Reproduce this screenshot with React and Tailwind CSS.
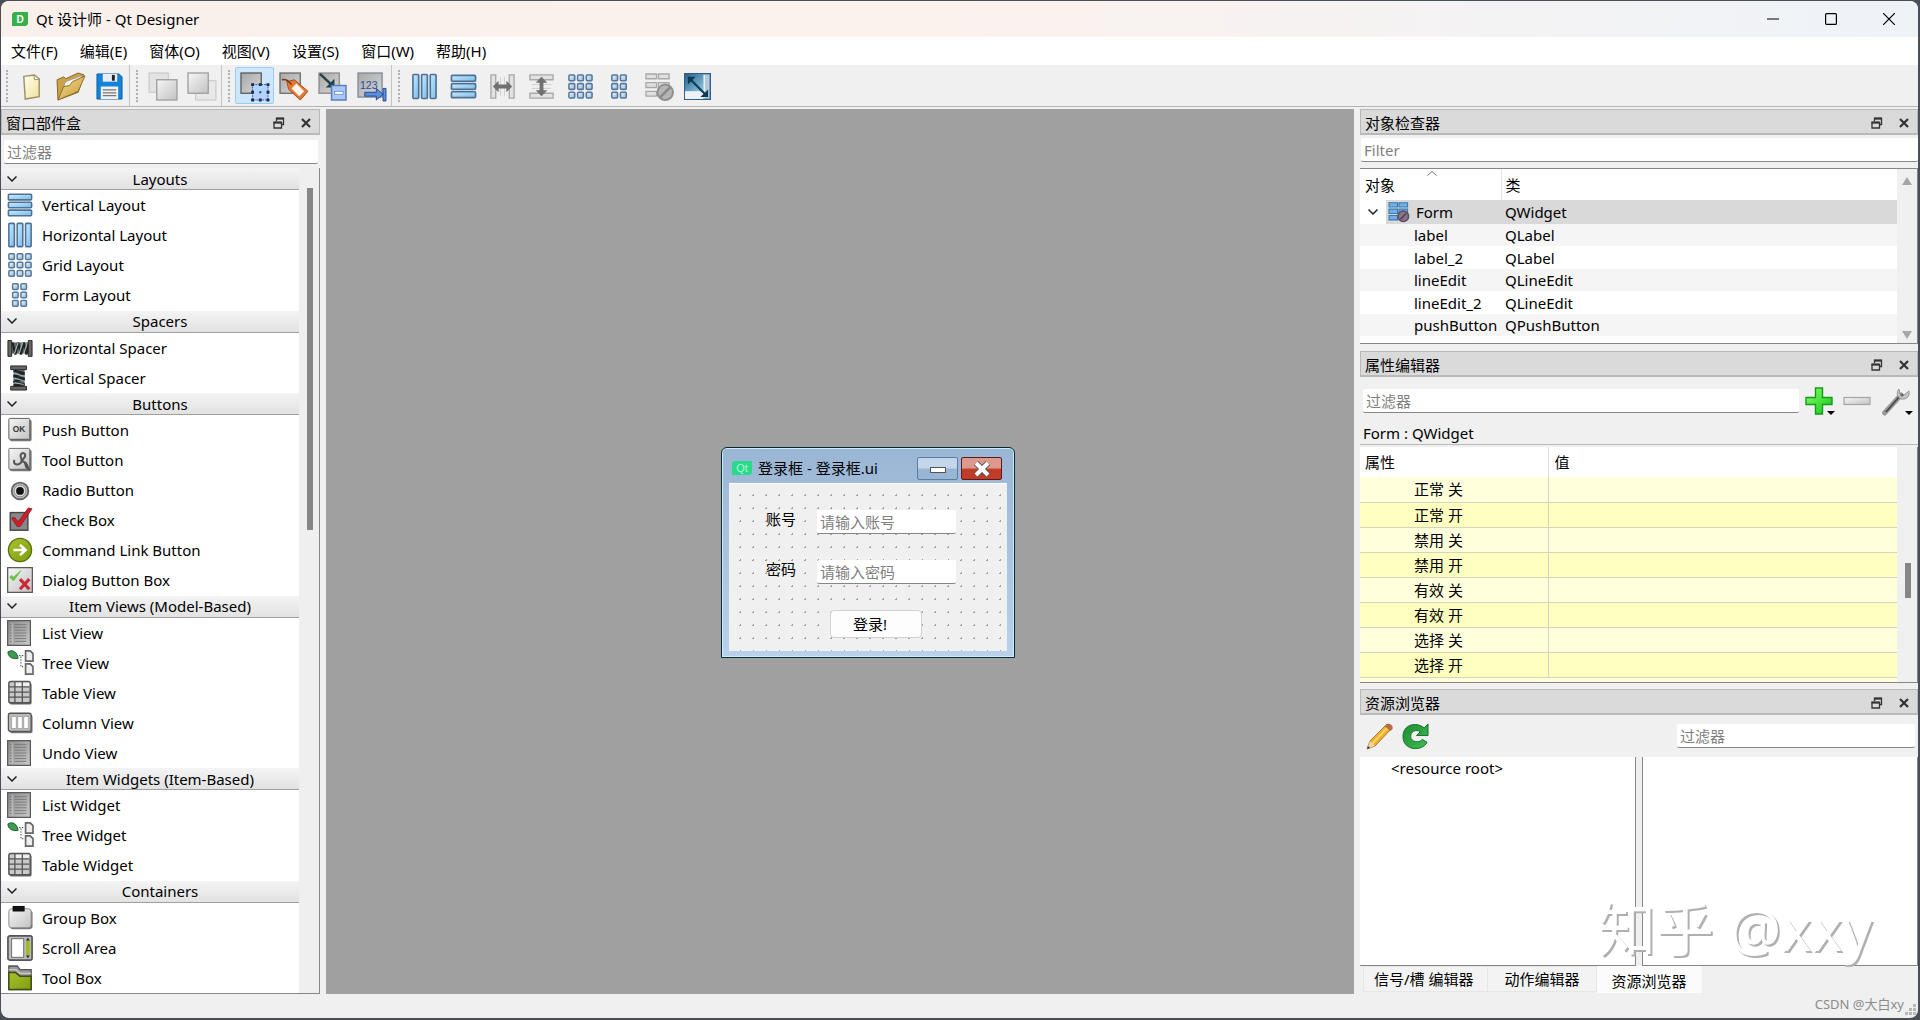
import { Fragment } from "react";

const sections = [
  {
    title: "Layouts",
    items: [["Vertical Layout", "rows"], ["Horizontal Layout", "columns"], ["Grid Layout", "grid"], ["Form Layout", "form"]],
  },
  { title: "Spacers", items: [["Horizontal Spacer", "hspring"], ["Vertical Spacer", "vspring"]] },
  {
    title: "Buttons",
    items: [
      ["Push Button", "push"],
      ["Tool Button", "tool"],
      ["Radio Button", "radio"],
      ["Check Box", "check"],
      ["Command Link Button", "command"],
      ["Dialog Button Box", "dialog"],
    ],
  },
  {
    title: "Item Views (Model-Based)",
    items: [
      ["List View", "list"],
      ["Tree View", "tree"],
      ["Table View", "table"],
      ["Column View", "columnView"],
      ["Undo View", "list"],
    ],
  },
  { title: "Item Widgets (Item-Based)", items: [["List Widget", "list"], ["Tree Widget", "tree"], ["Table Widget", "table"]] },
  { title: "Containers", items: [["Group Box", "group"], ["Scroll Area", "scroll"], ["Tool Box", "toolbox"]] },
];

const toolGroups = [
  [["新建", "new"], ["打开", "open"], ["保存", "save"]],
  [["放到后面", "back"], ["放到前面", "front"]],
  [["编辑窗口部件", "widgets"], ["编辑信号/槽", "signals"], ["编辑伙伴", "buddies"], ["编辑 Tab 顺序", "taborder"]],
  [
    ["水平布局", "columns"],
    ["垂直布局", "rows"],
    ["水平分裂器布局", "hsplit"],
    ["垂直分裂器布局", "vsplit"],
    ["栅格布局", "grid"],
    ["窗体布局", "form"],
    ["打破布局", "breakLayout"],
    ["调整大小", "adjust"],
  ],
];

const menus = ["文件(F)", "编辑(E)", "窗体(O)", "视图(V)", "设置(S)", "窗口(W)", "帮助(H)"];

const objects = [
  ["label", "QLabel"],
  ["label_2", "QLabel"],
  ["lineEdit", "QLineEdit"],
  ["lineEdit_2", "QLineEdit"],
  ["pushButton", "QPushButton"],
];

const properties = ["正常 关", "正常 开", "禁用 关", "禁用 开", "有效 关", "有效 开", "选择 关", "选择 开"];

const Cells = ({ xs, ys }) =>
  ys.map((y) => xs.map((x) => (
    <rect key={`${x}-${y}`} x={x} y={y} width="6" height="6" rx="1" fill="url(#cell)" stroke="#56799c" strokeWidth="1.6" />
  )));

const icons = {
  rows: [2.5, 11, 19.5].map((y) => (
    <rect key={y} x="1.5" y={y} width="25" height="6" rx="1" fill="url(#blue)" stroke="#4f7196" strokeWidth="1.7" />
  )),
  columns: [2, 11, 20].map((x) => (
    <rect key={x} x={x} y="1.5" width="6" height="25" rx="1" fill="url(#blue)" stroke="#4f7196" strokeWidth="1.7" />
  )),
  grid: <Cells xs={[2, 11, 20]} ys={[2, 11, 20]} />,
  form: <Cells xs={[6, 15]} ys={[2, 11, 20]} />,
  hspring: (
    <>
      <path d="M5 8h18v12H5z" fill="#5d6c70" />
      <path d="M6 8l3 13 3-13 3 13 3-13 3 13 2-13" fill="none" stroke="#222" strokeWidth="2.4" />
      <path d="M8 20l4-12M13 20l4-12M18 20l4-12" stroke="#9fb6bd" strokeWidth="1.3" />
      <path d="M1 6h4v17H1zM23 6h4v17h-4z" fill="#666" stroke="#222" />
    </>
  ),
  vspring: (
    <>
      <path d="M7 5h12v18H7z" fill="#5d6c70" />
      <path d="M7 6l12 3-12 3 12 3-12 3 12 3-12 1" fill="none" stroke="#222" strokeWidth="2.4" />
      <path d="M8 9l10 3M8 14l10 3M8 19l10 2" stroke="#9fb6bd" strokeWidth="1.3" />
      <path d="M4 1h17v4H4zM4 23h17v4H4z" fill="#666" stroke="#222" />
    </>
  ),
  push: (
    <>
      <rect x="3" y="3" width="23.5" height="23" rx="2" fill="#777" />
      <rect x="2" y="1.5" width="22.5" height="22.5" rx="1" fill="url(#silver)" stroke="#555" />
      <text x="13" y="16" textAnchor="middle" fontSize="9" fontWeight="700" fill="#333" fontFamily="Liberation Sans">OK</text>
    </>
  ),
  tool: (
    <>
      <rect x="3" y="3" width="23.5" height="23" rx="2" fill="#777" />
      <rect x="2" y="1.5" width="22.5" height="22.5" rx="1" fill="url(#silver)" stroke="#666" />
      <path d="M8 14c-2 5 4 6 7 3 3-4-2-6 0-9 2-3 6-1 4 3l-3 4 4 2 4 8" fill="none" stroke="#555" strokeWidth="2.2" />
      <path d="M18 17l4 1 3 7-5-2z" fill="#555" />
    </>
  ),
  radio: (
    <>
      <circle cx="14" cy="15" r="9" fill="#c9c9c9" stroke="#666" strokeWidth="2" />
      <circle cx="14" cy="15" r="6.5" fill="#ddd" stroke="#777" />
      <circle cx="14" cy="15" r="4.200" fill="#111" />
    </>
  ),
  check: (
    <>
      <rect x="3.5" y="6" width="19" height="19" fill="#888" stroke="#444" strokeWidth="1.5" />
      <path d="M5 12l3-1 4 5L23 1l4 1-13 19h-3z" fill="#cf1e28" stroke="#8c1018" strokeWidth=".8" />
    </>
  ),
  command: (
    <>
      <circle cx="14" cy="14" r="12.5" fill="url(#lime)" stroke="#55700f" strokeWidth="1.4" />
      <path d="M7 14h12M14 8.500l6 5.500-6 5.500" fill="none" stroke="#fff" strokeWidth="2.8" />
    </>
  ),
  dialog: (
    <>
      <rect x=".7" y=".7" width="26.600" height="26.600" fill="url(#silver)" stroke="#555" strokeWidth="1.3" />
      <path d="M3 11l4 4 8-11-8 7-2-2z" fill="#6cc24a" stroke="#6cc24a" />
      <path d="M14 13l10 11M24 13L14 24" stroke="#cc2a36" strokeWidth="3.4" />
    </>
  ),
  list: (
    <>
      <rect x=".7" y=".7" width="24.500" height="26.600" fill="url(#steel)" stroke="#555" strokeWidth="1.3" />
      <path d="M5.5 3v22" stroke="#ccc" />
      {[5, 8, 11, 14, 17, 20, 23].map((y) => (
        <path key={y} d={`M3 ${y}h2M8 ${y}h13`} stroke="#6d6d6d" strokeWidth=".8" />
      ))}
    </>
  ),
  tree: (
    <>
      <path d="M1 2c5-3 10 0 11 7-6 1-11-1-11-7z" fill="#3b9b50" stroke="#1d5b2c" />
      <path d="M13 6h6M15 7v11h4" fill="none" stroke="#333" strokeDasharray="1.5 1.5" />
      <path d="M20 1h5l3 3v8h-8zM20 15h5l3 3v8h-8z" fill="#eee" stroke="#666" strokeWidth="1.8" />
    </>
  ),
  table: (
    <>
      <rect x="3" y="3" width="23.500" height="23.500" rx="2" fill="#666" />
      <rect x="2" y="1.500" width="23" height="23" rx="2" fill="#c9c9c9" stroke="#555" strokeWidth="1.6" />
      <path d="M9 3h15v4H9z" fill="#eee" />
      <path d="M2 7.500h22M2 13h22M2 18.500h22M8.500 2v22M16.500 2v22" stroke="#555" strokeWidth="1.4" />
    </>
  ),
  columnView: (
    <>
      <rect x="3" y="5" width="24.500" height="20" rx="2" fill="#777" />
      <rect x="1.500" y="3.500" width="24.500" height="19.500" rx="2" fill="#bbb" stroke="#555" strokeWidth="1.4" />
      <path d="M5 7h5v13H5zM11.500 7h5v13h-5zM18 7h5v13h-5z" fill="#fff" stroke="#999" strokeWidth=".8" />
    </>
  ),
  group: (
    <>
      <rect x="3" y="6" width="24.500" height="20" rx="3" fill="#777" />
      <rect x="2" y="4" width="24" height="20.500" rx="3" fill="url(#silver)" stroke="#888" />
      <rect x="6" y="1" width="13" height="6" fill="#111" />
    </>
  ),
  scroll: (
    <>
      <rect x="1" y="1" width="26" height="26" rx="2" fill="#bbb" stroke="#555" strokeWidth="1.8" />
      <rect x="5" y="4" width="13" height="20" fill="#fff" stroke="#666" />
      <rect x="20.500" y="6" width="4" height="16" fill="#a2b927" />
      <path d="M20.500 6l2-3 2 3zM20.500 22l2 3 2-3z" fill="#222" />
    </>
  ),
  toolbox: (
    <>
      <path d="M2 1h9l3 4h12v21.500H2z" fill="#999" stroke="#555" strokeWidth="1.5" />
      <path d="M2 5h8l4 4h12" fill="none" stroke="#ccc" strokeWidth="1.200" />
      <path d="M2 8h7l5 4h12v14.500H2z" fill="url(#lime)" stroke="#3f4a14" strokeWidth="1.600" />
    </>
  ),
  new: (
    <>
      <path d="M6 3.500L17 2l5 4v18.500L7.500 27z" fill="url(#paper)" stroke="#9c9364" strokeWidth="1.500" />
      <path d="M16.500 2l.5 5 5-.5z" fill="#fff" stroke="#9c9364" />
    </>
  ),
  open: (
    <>
      <path d="M0 7l7-3 2 2 13-6 6 2-6 18L1 28z" fill="#c9a24a" stroke="#84642a" />
      <path d="M6 17l3-8L25 3l2 2-5 11-15 6z" fill="#f6f6ee" stroke="#999" strokeWidth=".8" />
      <path d="M1 28l6-14 6-1 3-4 13-6-7 16z" fill="url(#gold)" stroke="#8c6c25" />
    </>
  ),
  save: (
    <>
      <path d="M1 1h23l3 3v23H1z" fill="#1583d8" stroke="#0d5fa5" />
      <rect x="7" y="1" width="15" height="8" fill="#e9eef2" />
      <rect x="16.500" y="2" width="3" height="6" fill="#222" />
      <rect x="5" y="14" width="18" height="13" fill="#f1f1f1" />
      <path d="M7 17.500h14M7 20.500h14M7 23.500h14" stroke="#777" strokeWidth="1.300" />
    </>
  ),
  back: (
    <>
      <rect x="0" y="0" width="20" height="20" fill="#e3e3e3" stroke="#c3c3c3" />
      <rect x="8" y="7" width="21" height="21" fill="url(#silver)" stroke="#a0a0a0" strokeWidth="1.400" />
    </>
  ),
  front: (
    <>
      <rect x="8" y="8" width="21" height="20" fill="#e8e8e8" stroke="#c3c3c3" />
      <rect x="0" y="0" width="21" height="21" fill="url(#silver)" stroke="#a0a0a0" strokeWidth="1.400" />
    </>
  ),
  widgets: (
    <>
      <rect x="0" y="0" width="21" height="21" fill="url(#gray)" stroke="#555" strokeWidth="1.300" />
      <rect x="12" y="12" width="16" height="16" fill="#b4d3fb" stroke="#3558a0" strokeDasharray="2 1" />
      <path d="M10.500 10.500h3v3h-3zM18.500 10.500h3v3h-3zM26.500 10.500h3v3h-3zM10.500 18.500h3v3h-3zM26.500 18.500h3v3h-3zM10.500 26.500h3v3h-3zM18.500 26.500h3v3h-3zM26.500 26.500h3v3h-3z" fill="#1b2b55" />
      <rect x="19" y="19" width="2" height="2" fill="#1b3c80" />
    </>
  ),
  signals: (
    <>
      <rect x="0" y="0" width="21" height="21" fill="url(#gray)" stroke="#666" strokeWidth="1.300" />
      <path d="M7 9l8-2 14 12-8 9L9 17z" fill="#e07a35" stroke="#a64c18" />
      <path d="M12 16l5-5 8 8-5 5z" fill="#fff4ec" />
      <path d="M2 7c4-1 7 1 10 5" fill="none" stroke="#7e3418" strokeWidth="1.500" />
    </>
  ),
  buddies: (
    <>
      <rect x="0" y="0" width="21" height="21" fill="url(#gray)" stroke="#888" strokeWidth="1.300" />
      <path d="M1 1l13 12" stroke="#263f49" strokeWidth="2.500" />
      <path d="M16 6v9H7z" fill="#1d424f" />
      <rect x="13" y="13" width="15" height="15" fill="#a8c8fa" stroke="#5d7ab2" strokeWidth="1.500" />
      <rect x="16" y="19" width="9" height="3" fill="#fff" stroke="#6987bd" strokeWidth=".8" />
    </>
  ),
  taborder: (
    <>
      <rect x="0" y="0" width="25" height="25" fill="url(#gray)" stroke="#7b8798" strokeWidth="1.300" />
      <text x="2" y="17" fontSize="11" fill="#2c4f9a" fontFamily="Liberation Sans">123</text>
      <path d="M7 20h12v-4l7 6-7 6v-4H7zM26 16h3v13h-3z" fill="#5a8fe0" stroke="#21488f" />
    </>
  ),
  hsplit: (
    <>
      <path d="M2 2h5v24H2zM21 2h5v24h-5z" fill="#e2e2e2" stroke="#a8a8a8" strokeWidth="1.400" />
      <path d="M12 4v20M16 4v20" stroke="#ccc" />
      <path d="M4 14l6-6v4h8V8l6 6-6 6v-4h-8v4z" fill="#707070" />
    </>
  ),
  vsplit: (
    <>
      <path d="M2 2h24v5H2zM2 21h24v5H2z" fill="#e2e2e2" stroke="#a8a8a8" strokeWidth="1.400" />
      <path d="M4 12h20M4 16h20" stroke="#ccc" />
      <path d="M14 4l6 6h-4v8h4l-6 6-6-6h4v-8H8z" fill="#707070" />
    </>
  ),
  breakLayout: (
    <>
      <path d="M1 1h11v5H1zM14 1h11v5H14zM1 10h11v5H1zM14 10h11v5H14zM1 19h11v5H1z" fill="#e0e0e0" stroke="#a8a8a8" strokeWidth="1.400" />
      <circle cx="21" cy="20" r="8" fill="#b5b5b5" stroke="#8f8f8f" strokeWidth="2" />
      <path d="M16 25l10-10" stroke="#888" strokeWidth="2.500" />
    </>
  ),
  adjust: (
    <>
      <rect x=".7" y=".7" width="26.600" height="26.600" fill="#b3c8da" stroke="#2f5d85" strokeWidth="1.400" />
      <path d="M1 1h19v18H1z" fill="url(#deep)" />
      <path d="M1 19h19v8H1z" fill="#eef2f5" />
      <path d="M21 2v24" stroke="#fff" />
      <path d="M7 7l15 15" stroke="#0f3c55" strokeWidth="2.200" />
      <path d="M4 4h8l-8 8zM25 25h-8l8-8z" fill="#0f3c55" />
    </>
  ),
  formBroken: (
    <>
      <path d="M0 1h12v6H0zM14 1h12v6H14zM0 10h12v6H0zM14 10h12v6H14zM0 19h12v6H0z" fill="#6bb2ea" stroke="#3d79ad" strokeWidth="1.500" />
      <circle cx="20" cy="20" r="7.500" fill="#8a7488" stroke="#5b4b63" strokeWidth="2" />
      <path d="M16 24l8-8" stroke="#4b3d52" strokeWidth="2" />
    </>
  ),
  plus: <path d="M10.500 1h7v9.500H27v7h-9.500V27h-7v-9.500H1v-7h9.500z" fill="url(#green)" stroke="#169a1c" strokeWidth="1.400" />,
  minus: <rect x="1" y="10.500" width="26" height="7" fill="url(#silver)" stroke="#a5a5a5" strokeWidth="1.200" />,
  wrench: (
    <>
      <path d="M2.500 26L19 8" stroke="#999" strokeWidth="5" strokeLinecap="round" />
      <path d="M4 25L17 10" stroke="#444" strokeWidth="1.600" />
      <path d="M17 2l1 5 4 1 5-4c1 5-2 9-8 8-4-2-5-7-2-10z" fill="#c4c4c4" stroke="#888" strokeWidth=".8" />
      <circle cx="20" cy="8" r="1.600" fill="#666" />
    </>
  ),
  pencil: (
    <>
      <path d="M1 27l3-8L21 2l5 4L9 24z" fill="#f0b32e" stroke="#a8762a" />
      <path d="M6.500 21.500L23 4" stroke="#ffd978" strokeWidth="1.500" />
      <path d="M20 3c2-3 8 0 6.500 4l-2 2-6-5z" fill="#b86c4c" />
      <path d="M1 27l3-8 5 5z" fill="#e9d3a8" />
      <path d="M1 27l1-3 2 2z" fill="#333" />
    </>
  ),
  reload: (
    <path d="M27 1v12H15l4-4c-5-3-10 0-10 5 0 6 9 7 12 3l5 3C21 30 1 29 1 14 1 2 14-2 23 5z" fill="url(#greenDark)" stroke="#1c6a2c" />
  ),
};

const Icon = ({ name, className = "size-7" }) => (
  <svg viewBox="0 0 28 28" className={`${className} shrink-0 overflow-visible`} aria-hidden="true">
    {icons[name]}
  </svg>
);

const gradients = [
  ["blue", "#c9ecff", "#79bbe8"],
  ["cell", "#f2faff", "#8fb5d6"],
  ["silver", "#f6f6f6", "#c2c2c2"],
  ["gray", "#a9a9a9", "#d6d6d6"],
  ["steel", "#8a8a8a", "#c9c9c9"],
  ["lime", "#a8c22a", "#7f9c14"],
  ["paper", "#fffef2", "#f2e29a"],
  ["gold", "#f5dd92", "#c69a35"],
  ["deep", "#2a6089", "#8fc8e8"],
  ["green", "#8cff6a", "#0fc716"],
  ["greenDark", "#1d8a35", "#3cc04e"],
];

const Gradients = () => (
  <svg className="absolute size-0" aria-hidden="true">
    <defs>
      {gradients.map(([id, from, to]) => (
        <linearGradient key={id} id={id} x1="0" y1="0" x2="1" y2="1">
          <stop offset="0" stopColor={from} />
          <stop offset="1" stopColor={to} />
        </linearGradient>
      ))}
    </defs>
  </svg>
);

const Chevron = () => (
  <svg viewBox="0 0 10 6" className="h-[6px] w-[10px]" aria-hidden="true">
    <path d="M.5.500L5 5 9.500.500" fill="none" stroke="#222" strokeWidth="1.500" />
  </svg>
);

const DockHeader = ({ title }) => (
  <header className="flex h-[26px] shrink-0 items-center border border-b-2 border-[#b9b9b9] bg-[#dadada] pt-[2px] pl-1">
    <h2 className="flex-1">{title}</h2>
    <button aria-label="浮动" className="mr-4">
      <svg viewBox="0 0 12 12" className="size-3">
        <path d="M3.500 4V1.500h7v6H8.500M1 5.500h7.500v5.500H1z" fill="none" stroke="#333" strokeWidth="1.300" />
        <path d="M3 1.500h8M.5 5.500h8" stroke="#333" strokeWidth="2.200" />
      </svg>
    </button>
    <button aria-label="关闭" className="mr-2">
      <svg viewBox="0 0 10 10" className="size-[10px]">
        <path d="M1 1l8 8M9 1L1 9" stroke="#333" strokeWidth="2.200" />
      </svg>
    </button>
  </header>
);

const Filter = ({ id, label, className = "" }) => (
  <input
    id={id}
    aria-label={label}
    placeholder={label}
    className={`h-6 min-w-0 rounded-xs border-b border-[#868686] bg-white px-[3px] outline-none placeholder:text-[#808080] ${className}`}
  />
);

const WidgetBox = () => (
  <aside className="flex w-[319px] shrink-0 flex-col">
    <DockHeader title="窗口部件盒" />
    <Filter label="过滤器" className="mr-[2px] ml-[3px] mt-[5px]" />
    <div className="mt-1 flex min-h-0 flex-1 border-r border-b border-[#868686]">
      <div className="flex flex-1 flex-col justify-between overflow-hidden bg-white">
        {sections.map((section) => (
          <section key={section.title}>
            <button className="relative flex h-[22px] w-full items-center justify-center border-b border-[#a0a0a0] bg-linear-to-b from-[#f4f4f4] to-[#e2e2e2] pl-5">
              <span className="absolute left-[6px]"><Chevron /></span>
              {section.title}
            </button>
            <ul>
              {section.items.map(([name, icon]) => (
                <li key={name} className="flex h-[30px] items-center gap-[9px] pl-[6px]">
                  <Icon name={icon} className="size-[26px]" />
                  {name}
                </li>
              ))}
            </ul>
          </section>
        ))}
      </div>
      <div className="w-5 bg-[#efefef] pt-5">
        <div className="ml-2 h-[342px] w-[6px] bg-[#868686]" />
      </div>
    </div>
  </aside>
);

const FormWindow = () => (
  <section className="absolute top-[338px] left-[395px] flex w-[294px] flex-col rounded-t-md border border-[#0c2733] bg-linear-to-b from-[#9ab6d4] to-[#b9d1ea] px-[7px] pb-[6px] shadow-[inset_0_0_0_1px_#c9eefa]">
    <header className="flex h-[35px] items-center pt-1">
      <svg viewBox="0 0 20 14" className="ml-[3px] h-[14px] w-5" aria-hidden="true">
        <path d="M2 0h18v12l-2 2H0V2z" fill="#2bd98b" />
        <text x="10" y="11" textAnchor="middle" fontSize="11" fill="#a8f3d0" fontFamily="Liberation Sans">Qt</text>
      </svg>
      <h2 className="ml-[6px] flex-1">登录框 - 登录框.ui</h2>
      <button aria-label="最小化" className="mt-[2px] flex h-[23px] w-[41px] items-center justify-center rounded-xs border border-[#5d7ba3] bg-linear-to-b from-[#c3d6ea] from-45% to-[#98b5d4] to-55%">
        <span className="mt-[2px] h-[6px] w-4 border border-[#555] bg-white" />
      </button>
      <button aria-label="关闭" className="mt-[2px] mr-[5px] ml-[3px] flex h-[23px] w-[41px] items-center justify-center rounded-xs border border-[#5e1a1a] bg-linear-to-b from-[#dc9a8e] from-45% to-[#c03c28] to-55%">
        <svg viewBox="0 0 18 16" className="h-4 w-[18px]">
          <path d="M3 2l12 12M15 2L3 14" stroke="#555" strokeWidth="6" />
          <path d="M3 2l12 12M15 2L3 14" stroke="#fff" strokeWidth="4" />
        </svg>
      </button>
    </header>
    <form
      className="grid grid-cols-[51px_139px] gap-y-[26px] border-t border-white bg-[#f0f0f0] bg-[radial-gradient(circle_at_center,#a2a2a2_0,#a2a2a2_1px,transparent_1px)] bg-[length:13px_13px] bg-position-[5px_5px] pt-[26px] pb-[13px] pl-[37px]"
      onSubmit={(e) => e.preventDefault()}
    >
      <label htmlFor="account" className="leading-[18px]">账号</label>
      <Filter id="account" label="请输入账号" />
      <label htmlFor="password" className="leading-[18px]">密码</label>
      <Filter id="password" label="请输入密码" />
      <button className="col-span-2 ml-16 h-7 w-[92px] rounded-sm border border-[#cfcfcf] bg-[#fdfdfd] pr-3">登录!</button>
    </form>
  </section>
);

const ObjectInspector = () => (
  <section className="flex flex-col">
    <DockHeader title="对象检查器" />
    <Filter label="Filter" className="mt-[3px] ml-px" />
    <div className="mt-[6px] flex h-[176px] border border-l-0 border-[#868686] bg-white">
      <table className="h-fit w-full table-fixed border-collapse text-left">
        <thead>
          <tr className="h-[31px]">
            <th className="relative w-[141px] border-r border-[#e2e2e2] pl-[5px] font-normal">
              对象
              <svg viewBox="0 0 10 5" className="absolute top-[2px] left-[67px] h-[5px] w-[10px]" aria-hidden="true">
                <path d="M.5 4.500L5 .5l4.500 4" fill="none" stroke="#777" />
              </svg>
            </th>
            <th className="pl-1 font-normal">类</th>
          </tr>
        </thead>
        <tbody>
          <tr className="h-6 bg-[#d9d9d9]">
            <td className="bg-white p-0">
              <div className="flex items-center pl-2">
                <Chevron />
                <div className="ml-2 flex h-6 flex-1 items-center gap-[7px] bg-[#d9d9d9] pl-[3px]">
                  <Icon name="formBroken" className="size-5" />
                  Form
                </div>
              </div>
            </td>
            <td className="p-0 pl-1">QWidget</td>
          </tr>
          {objects.map(([name, type], i) => (
            <tr key={name} className={i % 2 ? "h-[23px] leading-5" : "h-[22px] bg-[#f5f5f5] leading-5"}>
              <td className="p-0 pl-[54px]">{name}</td>
              <td className="p-0 pl-1">{type}</td>
            </tr>
          ))}
        </tbody>
      </table>
      <div className="flex w-5 shrink-0 flex-col items-center justify-between bg-[#f0f0f0] pt-2 pb-1">
        <svg viewBox="0 0 10 8" className="h-2 w-[10px]"><path d="M5 0l5 8H0z" fill="#a6a6a6" /></svg>
        <svg viewBox="0 0 10 8" className="h-2 w-[10px]"><path d="M5 8l5-8H0z" fill="#a6a6a6" /></svg>
      </div>
    </div>
  </section>
);

const DropArrow = () => (
  <svg viewBox="0 0 8 4" className="absolute right-[-2px] bottom-0 h-1 w-2"><path d="M0 0h8L4 4z" fill="#000" /></svg>
);

const PropertyEditor = () => (
  <section className="mt-[7px] flex flex-col">
    <DockHeader title="属性编辑器" />
    <div className="flex h-[46px] items-center pt-[2px] pr-[7px] pl-[3px]">
      <Filter label="过滤器" className="flex-1" />
      <button aria-label="添加动态属性" className="relative ml-[6px]"><Icon name="plus" /><DropArrow /></button>
      <button aria-label="删除动态属性" className="ml-[10px]"><Icon name="minus" /></button>
      <button aria-label="配置" className="relative ml-[10px]"><Icon name="wrench" className="h-7 w-[30px]" /><DropArrow /></button>
    </div>
    <p className="h-[22px] border-b border-[#b9b9b9] pl-[3px] leading-5">Form : QWidget</p>
    <div className="mt-[2px] flex h-[236px] overflow-hidden border-r border-b border-[#868686] bg-[#ffffdc]">
      <table className="h-fit w-full table-fixed border-collapse text-left">
        <thead>
          <tr className="h-[30px] bg-white">
            <th className="w-[188px] border-r border-[#e2e2e2] pl-[5px] font-normal">属性</th>
            <th className="pl-[6px] font-normal">值</th>
          </tr>
        </thead>
        <tbody>
          {properties.map((name, i) => (
            <tr key={name} className={i % 2 ? "h-[25px] border-b border-[#d4d4c0] bg-[#ffffbf]" : "h-[25px] border-b border-[#d4d4c0] bg-[#ffffdc]"}>
              <td className="border-r border-[#d4d4c0] p-0 pl-[54px]">{name}</td>
              <td className="p-0" />
            </tr>
          ))}
        </tbody>
      </table>
      <div className="w-5 shrink-0 bg-[#f0f0f0] pt-[116px]">
        <div className="ml-2 h-[35px] w-[6px] bg-[#868686]" />
      </div>
    </div>
  </section>
);

const ResourceBrowser = () => (
  <section className="mt-[6px] flex min-h-0 flex-1 flex-col">
    <DockHeader title="资源浏览器" />
    <div className="flex h-[42px] items-center pr-[3px] pl-[6px]">
      <button aria-label="编辑资源"><Icon name="pencil" /></button>
      <button aria-label="重新加载" className="ml-2"><Icon name="reload" className="size-[27px]" /></button>
      <Filter label="过滤器" className="ml-auto w-[238px]" />
    </div>
    <div className="grid flex-1 grid-cols-2 gap-[6px]">
      <div className="border-r border-b border-[#868686] bg-white pl-[31px]">&lt;resource root&gt;</div>
      <div className="border border-t-0 border-[#868686] bg-white" />
    </div>
    <nav className="flex h-7 items-start pl-[3px]">
      <button className="h-[26px] border border-[#e6e6e6] bg-[#f3f3f3] pr-[14px] pl-[10px]">信号/槽 编辑器</button>
      <button className="h-[26px] border border-l-0 border-[#e6e6e6] bg-[#f3f3f3] px-4">动作编辑器</button>
      <button className="h-[27px] bg-[#fbfbfb] px-[15px] pt-[2px]">资源浏览器</button>
    </nav>
  </section>
);

export default function App() {
  return (
    <div className="h-screen bg-[#4a4e57] pt-px pr-[2px] pb-[2px] pl-px font-['Noto_Sans','Noto_Sans_CJK_SC',sans-serif] text-[15px] leading-[22px] text-black">
      <Gradients />
      <div className="relative flex h-full flex-col overflow-hidden rounded-lg bg-[#f0f0f0]">
        <header className="flex h-9 shrink-0 items-center bg-linear-to-r from-[#f9f0ec] via-[#fbf2ee] to-[#eef3f8] pl-[11px]">
          <svg viewBox="0 0 16 14" className="h-[14px] w-4" aria-hidden="true">
            <path d="M2 0h14v12l-2 2H0V2z" fill="#35b04a" />
            <text x="8" y="11" textAnchor="middle" fontSize="10" fontWeight="700" fill="#fff" fontFamily="Liberation Sans">D</text>
          </svg>
          <h1 className="ml-2 flex-1">Qt 设计师 - Qt Designer</h1>
          <button aria-label="最小化" className="flex w-[58px] justify-center">
            <svg viewBox="0 0 12 12" className="size-3"><path d="M0 6h12" stroke="#000" strokeWidth="1.200" /></svg>
          </button>
          <button aria-label="最大化" className="flex w-[58px] justify-center">
            <svg viewBox="0 0 12 12" className="size-3"><rect x=".6" y=".6" width="10.800" height="10.800" rx="1" fill="none" stroke="#000" strokeWidth="1.200" /></svg>
          </button>
          <button aria-label="关闭" className="flex w-[58px] justify-center">
            <svg viewBox="0 0 12 12" className="size-3"><path d="M0 0l12 12M12 0L0 12" stroke="#000" strokeWidth="1.200" /></svg>
          </button>
        </header>
        <nav className="flex h-7 shrink-0 items-center gap-[22px] bg-white pl-[10px]">
          {menus.map((menu) => (
            <button key={menu}>{menu}</button>
          ))}
        </nav>
        <div className="flex h-[42px] shrink-0 items-center border-b border-[#b4b4b4]">
          {toolGroups.map((group, g) => (
            <Fragment key={g}>
              <div className={g ? "flex w-[13px] justify-center" : "flex w-[11px] justify-center"}>
                <span className="h-8 border-l-2 border-dotted border-[#b0b0b0]" />
              </div>
              <div className={g < 3 ? "flex h-full items-center border-r border-[#c4c4c4]" : "flex h-full items-center"}>
                {group.map(([label, icon]) => (
                  <button
                    key={label}
                    aria-label={label}
                    className={
                      icon === "widgets"
                        ? "flex h-[37px] w-[39px] items-center justify-center rounded-xs border border-[#99cdf5] bg-[#cce6fb] pt-px"
                        : "flex h-[37px] w-[39px] items-center justify-center pt-px"
                    }
                  >
                    <Icon name={icon} className="size-[27px]" />
                  </button>
                ))}
              </div>
            </Fragment>
          ))}
        </div>
        <div className="flex min-h-0 flex-1 gap-[6px] pt-[2px]">
          <WidgetBox />
          <main className="relative flex-1 bg-[#a0a0a0]">
            <FormWindow />
          </main>
          <aside className="flex w-[558px] shrink-0 flex-col">
            <ObjectInspector />
            <PropertyEditor />
            <ResourceBrowser />
          </aside>
        </div>
        <footer className="flex h-6 shrink-0 items-end justify-end pr-[2px] pb-[2px]">
          <span className="mb-1 text-[13px] leading-4 text-[#8c8c8c]">CSDN @大白xy</span>
          <svg viewBox="0 0 12 12" className="size-3" aria-hidden="true">
            <path d="M9 0h3v3H9zM9 4h3v3H9zM9 8h3v3H9zM5 4h3v3H5zM5 8h3v3H5zM1 8h3v3H1z" fill="#b8b8b8" />
          </svg>
        </footer>
        <p className="pointer-events-none absolute right-[46px] bottom-[59px] text-[58px] leading-[60px] text-white [text-shadow:2px_2px_0_#b0b0b0]">知乎 @xxy</p>
      </div>
    </div>
  );
}
